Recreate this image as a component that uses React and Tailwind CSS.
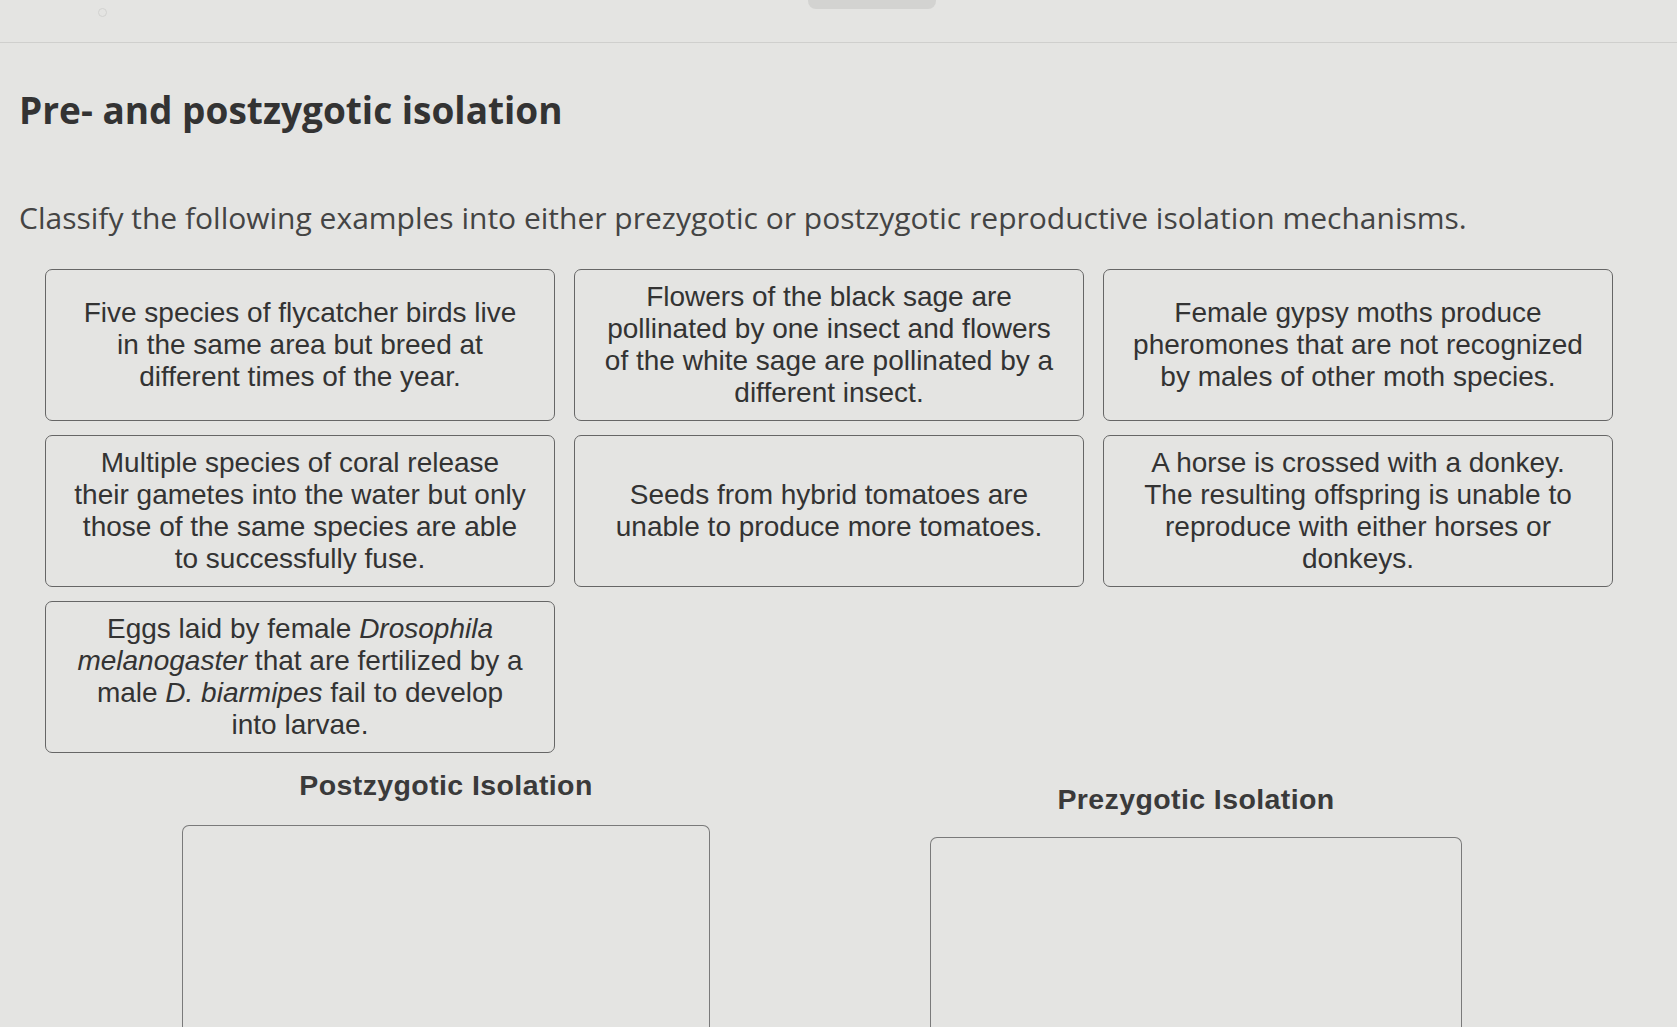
export default function App() {
  const card =
    "h-[152px] rounded-[7px] border-[1.5px] border-[#666] flex items-center justify-center px-2 text-center text-[28px] leading-[32px] text-[#333] whitespace-nowrap";
  const sans = { fontFamily: '"Liberation Sans", Arial, sans-serif' };

  return (
    <div className="w-[1677px] h-[1027px] overflow-hidden bg-[#e4e4e2] relative">
      {/* top bar */}
      <div className="h-[43px] border-b border-[#cfcfcd] relative">
        <div className="absolute left-[98px] top-[8px] w-[9px] h-[9px] rounded-full border border-[#d2d2d0]" />
        <div className="absolute left-[808px] top-0 w-[128px] h-[9px] rounded-b-[8px] bg-[#d3d3d1]" />
      </div>

      <div className="pl-[19px]" style={{ fontFamily: '"Open Sans", Lato, sans-serif' }}>
        <h1 className="mt-[42px] text-[37px] leading-[50px] font-bold text-[#333]">
          Pre- and postzygotic isolation
        </h1>
        <p className="mt-[63px] text-[30px] leading-[40px] text-[#444]">
          Classify the following examples into either prezygotic or postzygotic reproductive isolation mechanisms.
        </p>
      </div>

      <div className="mt-[31px] ml-[45px] w-[1568px] grid grid-cols-3 gap-x-[19px] gap-y-[14px]" style={sans}>
        <div className={card}>
          <span>
            Five species of flycatcher birds live
            <br />
            in the same area but breed at
            <br />
            different times of the year.
          </span>
        </div>
        <div className={card}>
          <span>
            Flowers of the black sage are
            <br />
            pollinated by one insect and flowers
            <br />
            of the white sage are pollinated by a
            <br />
            different insect.
          </span>
        </div>
        <div className={card}>
          <span>
            Female gypsy moths produce
            <br />
            pheromones that are not recognized
            <br />
            by males of other moth species.
          </span>
        </div>
        <div className={card}>
          <span>
            Multiple species of coral release
            <br />
            their gametes into the water but only
            <br />
            those of the same species are able
            <br />
            to successfully fuse.
          </span>
        </div>
        <div className={card}>
          <span>
            Seeds from hybrid tomatoes are
            <br />
            unable to produce more tomatoes.
          </span>
        </div>
        <div className={card}>
          <span>
            A horse is crossed with a donkey.
            <br />
            The resulting offspring is unable to
            <br />
            reproduce with either horses or
            <br />
            donkeys.
          </span>
        </div>
        <div className={card}>
          <span>
            Eggs laid by female <i>Drosophila</i>
            <br />
            <i>melanogaster</i> that are fertilized by a
            <br />
            male <i>D. biarmipes</i> fail to develop
            <br />
            into larvae.
          </span>
        </div>
      </div>

      <div className="flex mt-[14px]" style={sans}>
        <div className="ml-[182px] w-[528px] flex flex-col items-center">
          <div className="text-[28.5px] leading-[36px] font-bold text-[#3a3a3a] tracking-[0.4px]">Postzygotic Isolation</div>
          <div className="mt-[22px] w-full h-[220px] rounded-t-[7px] border-[1.5px] border-b-0 border-[#7a7a7a]" />
        </div>
        <div className="ml-[220px] w-[532px] flex flex-col items-center pt-[14px]">
          <div className="text-[28.5px] leading-[36px] font-bold text-[#3a3a3a] tracking-[0.4px]">Prezygotic Isolation</div>
          <div className="mt-[20px] w-full h-[220px] rounded-t-[7px] border-[1.5px] border-b-0 border-[#7a7a7a]" />
        </div>
      </div>
    </div>
  );
}
